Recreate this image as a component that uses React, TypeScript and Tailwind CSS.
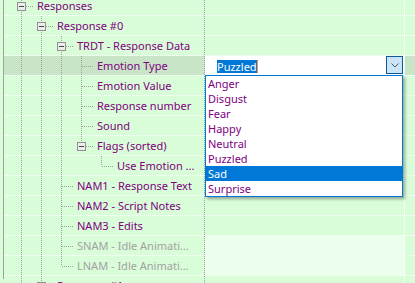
import React from 'react';

type TreeRow = {
  label: string;
  level: number;
  box?: 'minus' | 'plus';
  next: boolean;
  guides: boolean[];
  dim?: boolean;
  selected?: boolean;
  light?: boolean;
};

const rows: TreeRow[] = [
  { label: 'Responses', level: 0, box: 'minus', next: true, guides: [] },
  { label: 'Response #0', level: 1, box: 'minus', next: true, guides: [true] },
  { label: 'TRDT - Response Data', level: 2, box: 'minus', next: true, guides: [true, true] },
  { label: 'Emotion Type', level: 3, next: true, guides: [true, true, true], selected: true },
  { label: 'Emotion Value', level: 3, next: true, guides: [true, true, true] },
  { label: 'Response number', level: 3, next: true, guides: [true, true, true] },
  { label: 'Sound', level: 3, next: true, guides: [true, true, true] },
  { label: 'Flags (sorted)', level: 3, box: 'minus', next: false, guides: [true, true, true] },
  { label: 'Use Emotion ...', level: 4, next: false, guides: [true, true, true, false] },
  { label: 'NAM1 - Response Text', level: 2, next: true, guides: [true, true] },
  { label: 'NAM2 - Script Notes', level: 2, next: true, guides: [true, true] },
  { label: 'NAM3 - Edits', level: 2, next: true, guides: [true, true] },
  { label: 'SNAM - Idle Animati...', level: 2, next: true, guides: [true, true], dim: true, light: true },
  { label: 'LNAM - Idle Animati...', level: 2, next: false, guides: [true, true], dim: true, light: true },
  { label: 'Response #1', level: 1, box: 'plus', next: true, guides: [true] },
];

const emotions = ['Anger', 'Disgust', 'Fear', 'Happy', 'Neutral', 'Puzzled', 'Sad', 'Surprise'];

const DOT = '#a0a0a0';

// connector lines + expand box for one tree row
function Guides({ row }: { row: TreeRow }) {
  const w = 33 + row.level * 20;
  const cx = 17.5 + row.level * 20;
  return (
    <svg width={w} height={19} className="shrink-0" shapeRendering="crispEdges">
      {row.guides.map((on, l) =>
        on ? (
          <line key={l} x1={17.5 + l * 20} y1={0} x2={17.5 + l * 20} y2={19} stroke={DOT} strokeDasharray="1 1" />
        ) : null
      )}
      <line x1={cx} y1={0} x2={cx} y2={10} stroke={DOT} strokeDasharray="1 1" />
      {row.next && <line x1={cx} y1={10} x2={cx} y2={19} stroke={DOT} strokeDasharray="1 1" />}
      <line x1={cx} y1={10.5} x2={cx + 12} y2={10.5} stroke={DOT} strokeDasharray="1 1" />
      {row.box && (
        <g>
          <rect x={cx - 4} y={6.5} width={8} height={8} fill="#ececec" stroke="#919191" />
          <line x1={cx - 2.5} y1={10.5} x2={cx + 2.5} y2={10.5} stroke="#444" />
          {row.box === 'plus' && <line x1={cx} y1={8} x2={cx} y2={13} stroke="#444" />}
        </g>
      )}
    </svg>
  );
}

function EmotionCombo() {
  return (
    <>
      <div className="flex h-full items-start bg-white">
        <div className="flex flex-1 items-center pl-[12px] pt-[4px]">
          <span className="bg-[#0078d7] leading-[13px] text-white">Puzzled</span>
          <span className="h-[13px] w-px bg-[#ff8828]" />
        </div>
        <div className="mr-[1px] flex h-[18px] w-[17px] items-center justify-center border border-[#0b5a9c] bg-[#cce4f7]">
          <svg width="8" height="5" viewBox="0 0 8 5">
            <path d="M0.5 0.5 L4 4 L7.5 0.5" fill="none" stroke="#555" strokeWidth="1" />
          </svg>
        </div>
      </div>
      <div className="absolute left-0 top-[19px] z-10 w-[198px] border border-[#0078d7] bg-white shadow-[2px_2px_3px_rgba(0,0,0,0.35)]">
        {emotions.map((e) => (
          <div
            key={e}
            className={`h-[15px] pl-[2px] leading-[15px] ${e === 'Sad' ? 'bg-[#0078d7] text-white' : 'text-[#800080]'}`}
          >
            {e}
          </div>
        ))}
      </div>
    </>
  );
}

export default function App() {
  return (
    <div className="h-[283px] w-[415px] overflow-hidden bg-[#d9fcd9] font-['Noto_Sans',sans-serif] text-[11px]">
      <div className="ml-[3px] h-full border-l border-[#a0a0a0]">
        <div className="-mt-[4px]">
          {rows.map((row) => (
            <div key={row.label} className="flex h-[20px] border-b border-dotted border-white">
              <div
                className={`flex w-[201px] shrink-0 items-center border-r border-dotted border-[#a0a0a0] ${
                  row.selected ? 'bg-[#c8e5c8]' : ''
                }`}
              >
                <Guides row={row} />
                <span className={`whitespace-nowrap leading-[19px] ${row.dim ? 'text-[#a3a3a3]' : 'text-[#800080]'}`}>
                  {row.label}
                </span>
              </div>
              <div
                className={`relative w-[200px] shrink-0 border-r border-dotted border-white ${
                  row.light ? 'bg-[#ecfeec]' : ''
                }`}
              >
                {row.selected && <EmotionCombo />}
              </div>
              <div className={`flex-1 ${row.selected ? 'bg-[#c8e5c8]' : ''}`} />
            </div>
          ))}
        </div>
      </div>
    </div>
  );
}
